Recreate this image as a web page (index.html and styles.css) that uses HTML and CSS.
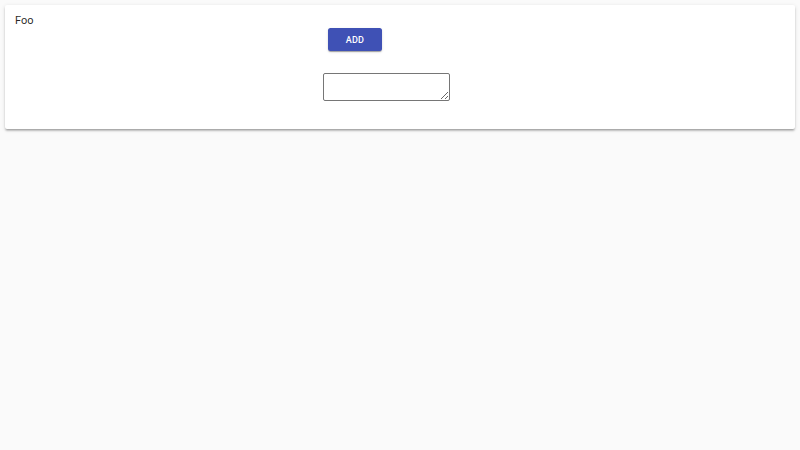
FILE: index.html
```html
<!DOCTYPE html>
<html>
<head>
<meta charset="utf-8">
<link rel="stylesheet" href="styles.css">
</head>
<body>
<div class="card">
  <div class="label">Foo</div>
  <div class="controls">
    <button class="btn">ADD</button>
    <textarea class="area"></textarea>
  </div>
</div>
</body>
</html>
```
FILE: styles.css
```css
html, body {
  margin: 0;
  padding: 0;
  background: #fafafa;
  width: 800px;
  height: 450px;
  overflow: hidden;
}
body {
  padding: 5px;
  box-sizing: border-box;
  font-family: Roboto, "Liberation Sans", sans-serif;
}
.card {
  background: #fff;
  height: 124px;
  box-sizing: border-box;
  padding: 10px;
  border-radius: 2px;
  box-shadow: 0 2px 2px -1px rgba(0,0,0,0.2), 0 2px 2px 0 rgba(0,0,0,0.14), 0 1px 4px 0 rgba(0,0,0,0.12);
  display: grid;
  grid-template-columns: 308px 1fr;
}
.label {
  font-size: 11px;
  line-height: 13px;
  margin-top: -1px;
  color: rgba(0,0,0,0.87);
}
.controls {
  display: flex;
  flex-direction: column;
  align-items: flex-start;
  padding-top: 13px;
}
.btn {
  margin-left: 5px;
  width: 54px;
  height: 23px;
  border: none;
  border-radius: 2.5px;
  background: #3f51b5;
  color: #fff;
  font-family: Roboto, "Liberation Sans", sans-serif;
  font-weight: 500;
  font-size: 9px;
  letter-spacing: 0.2px;
  padding: 0;
  box-shadow: 0 2px 1px -1px rgba(0,0,0,0.2), 0 1px 1px 0 rgba(0,0,0,0.14), 0 1px 3px 0 rgba(0,0,0,0.12);
}
.area {
  margin-top: 22px;
  width: 127px;
  height: 28px;
  box-sizing: border-box;
  border: 1px solid #767676;
  border-radius: 2px;
  padding: 2px;
  background: #fff;
}
```
